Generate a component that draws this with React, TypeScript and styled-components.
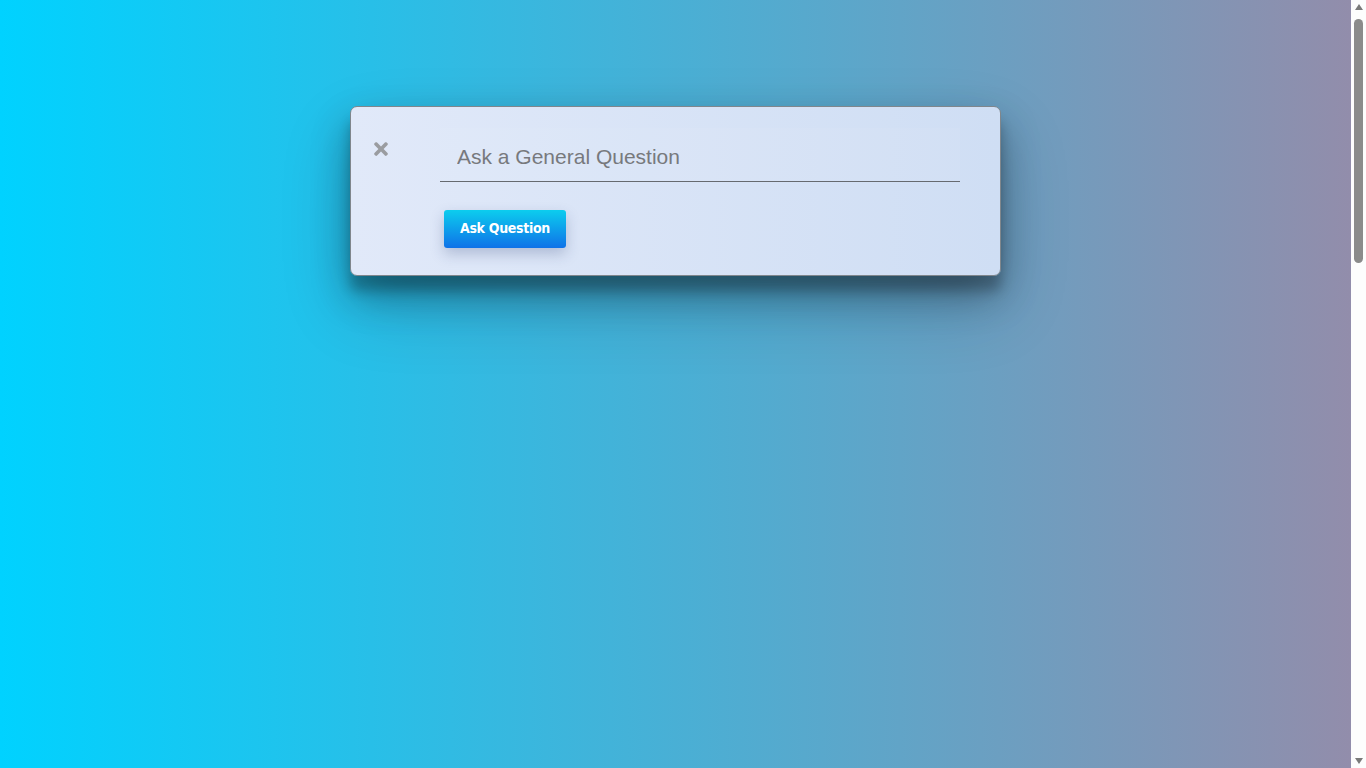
import React from 'react'
import styled, { createGlobalStyle } from 'styled-components'
import { FaTimes } from 'react-icons/fa'

const GlobalStyle = createGlobalStyle`
  html, body {
    margin: 0;
    padding: 0;
    background: #fdfdfd;
  }
  body {
    font-family: "Liberation Sans", Arial, sans-serif;
  }
`;

// the page as it looks with a classic 15px browser scrollbar beside it
const Page = styled.div`
  margin-right: 15px;
  min-height: 300vh;
  display: flex;
  justify-content: center;
  align-items: flex-start;
  padding-top: 106px;
  box-sizing: border-box;
  background: linear-gradient(to right, #00d2ff, #928dab);
`;

const ScrollBar = styled.div`
  position: fixed;
  top: 0;
  right: 0;
  width: 15px;
  height: 100vh;
  background: #fdfdfd;
  display: flex;
  flex-direction: column;
  align-items: center;
`;

const Arrow = styled.div<{ $down?: boolean }>`
  width: 0;
  height: 0;
  margin: ${p => (p.$down ? '3px 0 4px' : '4px 0 3px')};
  border-left: 4.5px solid transparent;
  border-right: 4.5px solid transparent;
  ${p => (p.$down ? 'border-top: 6px solid #7a7a7a;' : 'border-bottom: 6px solid #7a7a7a;')}
`;

const Track = styled.div`
  flex: 1;
  width: 100%;
  display: flex;
  justify-content: center;
  padding-top: 6px;
`;

const Thumb = styled.div`
  width: 9px;
  height: 244px;
  border-radius: 5px;
  background: #8b8b8b;
`;

const Card = styled.div`
  width: 651px;
  box-sizing: border-box;
  display: flex;
  padding: 21px 40px 27px 20px;
  background: linear-gradient(to right, #e1e9f9, #cfdef4);
  border: 1px solid #80868c;
  border-radius: 7px;
  box-shadow: 0 19px 38px rgba(0, 0, 0, 0.3), 0 15px 12px rgba(0, 0, 0, 0.22),
    0 30px 70px rgba(0, 20, 50, 0.2);
`;

const CloseButton = styled.button`
  width: 69px;
  height: 30px;
  padding: 0;
  margin-top: 11px;
  border: none;
  background: none;
  color: #9a9ca0;
  font-size: 20px;
  display: flex;
  align-items: flex-start;
  justify-content: flex-start;
  cursor: pointer;
`;

const Form = styled.div`
  flex: 1;
  display: flex;
  flex-direction: column;
  align-items: flex-start;
`;

const QuestionInput = styled.input`
  width: 100%;
  height: 54px;
  box-sizing: border-box;
  padding: 4px 17px 0;
  border: none;
  border-bottom: 1px solid #666a70;
  background: rgba(255, 255, 255, 0.05);
  font-family: "Liberation Sans", Arial, sans-serif;
  font-size: 21px;
  color: #333;
  outline: none;

  &::placeholder {
    color: #77797d;
  }
`;

const AskButton = styled.button`
  margin: 28px 0 0 4px;
  width: 122px;
  height: 38px;
  padding: 0 0 2px;
  border: none;
  border-radius: 3px;
  background: linear-gradient(to bottom, #0ccdee, #0f72e8);
  color: #fff;
  font-family: "DejaVu Sans Condensed", "DejaVu Sans", sans-serif;
  font-weight: bold;
  font-size: 14px;
  letter-spacing: -0.3px;
  box-shadow: 0 6px 14px rgba(40, 60, 110, 0.25);
  cursor: pointer;
`;

export default function App() {
  return (
    <>
      <GlobalStyle />
      <Page>
        <Card>
          <CloseButton aria-label="Close">
            <FaTimes />
          </CloseButton>
          <Form>
            <QuestionInput placeholder="Ask a General Question" />
            <AskButton>Ask Question</AskButton>
          </Form>
        </Card>
      </Page>
      <ScrollBar>
        <Arrow />
        <Track>
          <Thumb />
        </Track>
        <Arrow $down />
      </ScrollBar>
    </>
  )
}
